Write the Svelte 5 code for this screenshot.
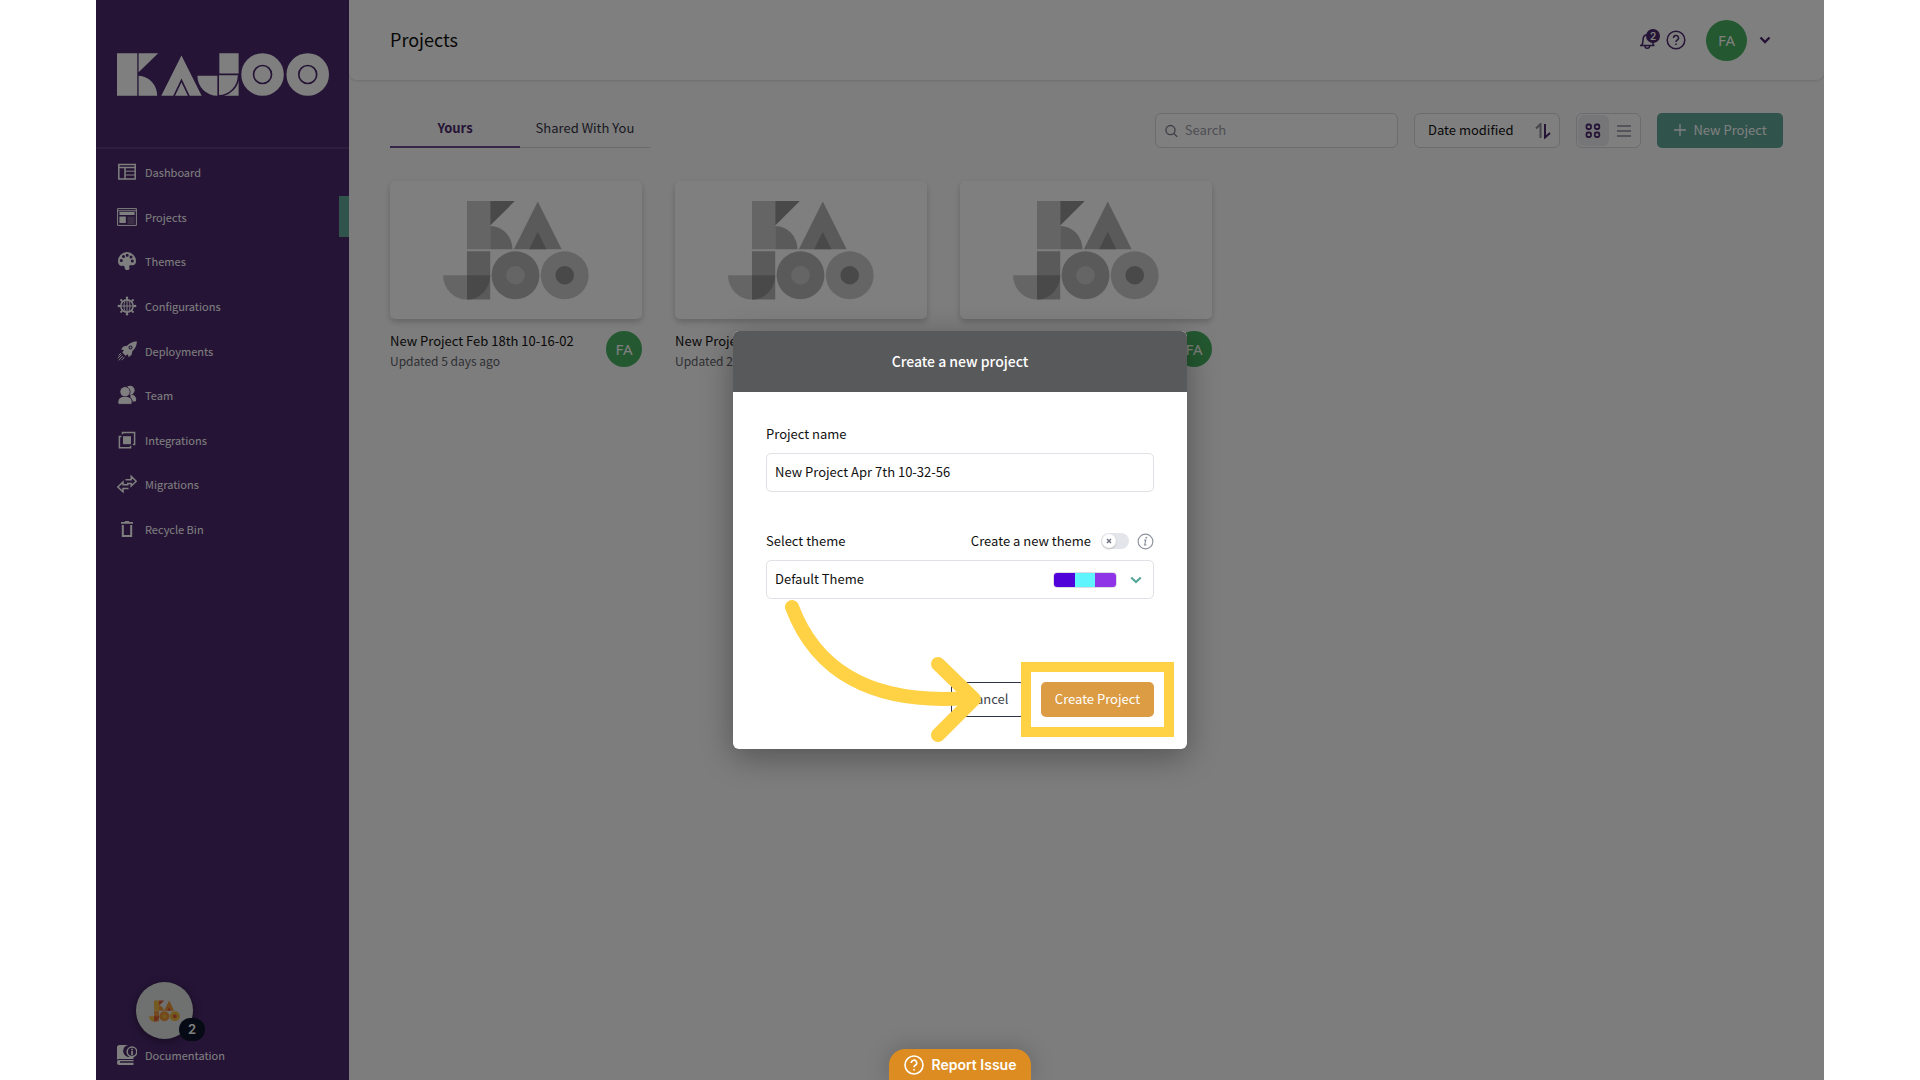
<script>
  const nav = ['Dashboard', 'Projects', 'Themes', 'Configurations', 'Deployments', 'Team', 'Integrations', 'Migrations', 'Recycle Bin'];
  const projects = [
    { name: 'New Project Feb 18th 10-16-02', updated: 'Updated 5 days ago' },
    { name: 'New Project Jan 30th 09-41', updated: 'Updated 2 months ago' },
    { name: 'New Project Jan 12th 14-05', updated: 'Updated 2 months ago' }
  ];
  let projectName = $state('New Project Apr 7th 10-32-56');
  let newTheme = $state(false);
</script>

{#snippet mark(kind)}
  <svg class="mark {kind}" viewBox="0 0 439 297" aria-hidden="true">
    <path class="a" d="M72 0h70v145H72z" />
    <path class="c" d="M142 0h74l-74 73z" />
    <path class="b" d="M142 75a67 70 0 0 1 67 70h-67z" />
    <path class="b" d="M285 1l72 144H213z" />
    <path class="c" d="M285 92l26 53h-52z" />
    <path class="b" d="M72 151h70v145H72z" />
    <path class="a" d="M0 223h72v73A72 73 0 0 1 0 223z" />
    <path class="c" d="M72 223h70a70 73 0 0 1-70 73z" />
    <circle class="b" cx="218" cy="223" r="72" />
    <circle class="a" cx="218" cy="223" r="28" />
    <circle class="a" cx="366" cy="223" r="72" />
    <circle class="c" cx="366" cy="223" r="28" />
  </svg>
{/snippet}

{#snippet navIcon(name)}
  <svg class="nav-icon" viewBox="0 0 20 20" aria-hidden="true">
    {#if name === 'Dashboard'}
      <path class="line" d="M1.8 2.5h16.4v14.4H1.8zM1.8 5.4h16.4M8 5.4v11.5" />
      <path class="thin" d="M8 9.2h10M8 13h10" />
    {:else if name === 'Projects'}
      <path class="thin" d="M.6 1.6h18.8v16.8H.6zM.6 3.8h18.8" />
      <path d="M2.4 5h15.2v3H2.4zM2.4 9.6h6.4V16H2.4z" />
      <path opacity=".25" d="M10.6 9.6h7V17h-7z" />
    {:else if name === 'Themes'}
      <path fill-rule="evenodd" d="M10 1a9 9 0 0 1 9 9c0 3.4-2 4.6-4.6 4.2-1.8-.3-2.600.4-2.100 1.800.5 1.600.1 3-2 3-1.600 0-2.500-1-2.700-2.600-.2-1.500-1.200-1.800-2.800-1.500C2.500 15.200 1 13 1 10a9 9 0 0 1 9-9zM6.500 4a1.500 1.500 0 1 0 0 3 1.500 1.500 0 0 0 0-3zm3.700-1.300a1.500 1.500 0 1 0 0 3 1.500 1.500 0 0 0 0-3zM14 4.400a1.500 1.500 0 1 0 0 3 1.500 1.500 0 0 0 0-3zm1.300 4.100a1.500 1.500 0 1 0 0 3 1.500 1.500 0 0 0 0-3zM4.300 8a1.500 1.500 0 1 0 0 3 1.500 1.500 0 0 0 0-3z" />
    {:else if name === 'Configurations'}
      <circle class="line" cx="10" cy="10" r="6.200" />
      <path class="thin" d="M10 3.800v12.400M3.800 10h12.400" />
      <ellipse class="thin" cx="10" cy="10" rx="3" ry="6.200" />
      <path class="line" d="M10 4V1.800M10 16v2.200M4 10H1.800M16 10h2.200M5.700 5.700L4.200 4.200M14.300 5.700l1.500-1.500M5.700 14.300l-1.500 1.500M14.300 14.300l1.500 1.500" />
      <circle cx="10" cy="1.800" r="1.200" /><circle cx="10" cy="18.200" r="1.200" /><circle cx="1.800" cy="10" r="1.200" /><circle cx="18.200" cy="10" r="1.200" />
      <circle cx="4.200" cy="4.200" r="1.100" /><circle cx="15.800" cy="4.200" r="1.100" /><circle cx="4.200" cy="15.800" r="1.100" /><circle cx="15.800" cy="15.800" r="1.100" />
    {:else if name === 'Deployments'}
      <path fill-rule="evenodd" d="M19.800.3c.1 2-.3 3.600-1 5.100-.7 1.600-2 3.200-3.400 4.600l-.8 3.800-3 2.400-.6-2.900-2.500 1.500-3.200-3.200 1.600-2.500L4 8.500l2.300-3 3.800-.8C12.500 2.300 15.500.6 19.800.3zM13.500 4.600a2 2 0 1 0 0 4 2 2 0 0 0 0-4z" />
      <circle cx="13.500" cy="6.600" r="1" />
      <path class="thin" d="M4.500 13.500L.8 17.200M5.800 15L1.500 19.400M7.500 16l-3 3.200" />
      <path class="thin" d="M3.800 12.200l-2.300 2.300" />
    {:else if name === 'Team'}
      <circle cx="13" cy="5.300" r="4.600" />
      <path d="M13.500 9.500c3.300 0 5.700 1.800 5.700 5.500 0 1.100-.8 1.600-1.800 1.600h-4z" />
      <g class="cut">
        <circle cx="8" cy="6.800" r="5" />
        <path d="M8 11.200c4.300 0 7.200 2.200 7.200 6.200 0 1.300-.8 2-2 2H2.800c-1.200 0-2-.7-2-2 0-4 2.900-6.200 7.200-6.200z" />
      </g>
      <circle cx="8" cy="6.800" r="4.500" />
    {:else if name === 'Integrations'}
      <path d="M6 6.200h8v8H6z" />
      <path class="line" d="M5.500 4.200V2.400h12.100v12h-1.800M4.500 6.500H2.400v11.300h11.200v-2" />
    {:else if name === 'Migrations'}
      <path class="line" d="M8.500 5.700h5.700V2.300l5 5-5 4.700V9.400H10M11.500 10.800H6V8L.8 13 6 17.800v-3.300h5.500" />
    {:else if name === 'Recycle Bin'}
      <path class="bold" d="M5.800 6v10.900h8.400V6" />
      <path d="M4 3h3.500l.8-1h3.400l.8 1H16v1.800H4z" />
    {:else}
      <path d="M2.500 0h8.800A6 6 0 0 0 13 12h3.500v2H2a2 2 0 0 0-2 1V2.500A2.500 2.500 0 0 1 2.500 0zM2 15h14.500v1.200H3v1.600h13.500V20H2a2 2 0 0 1-2-2v-1a2 2 0 0 1 2-2z" />
      <circle class="line" cx="15" cy="6.800" r="4.800" />
      <path d="M14.200 6h1.700v4h-1.700zM14.200 3.800h1.700v1.400h-1.700z" />
    {/if}
  </svg>
{/snippet}

<div class="stage">
  <div class="app">
    <aside>
      <a class="logo" href="#home" aria-label="Kajoo">
        <svg viewBox="0 0 638 128" aria-hidden="true">
          <path d="M0 0h61v128H0zM65 0h59L65 57zM65 68a57 60 0 0 1 56 60H65z" />
          <path d="M308 0h58v61h-58zM242 68h60v60a60 60 0 0 1-60-60zM307 66h59v62h-59z" />
          <path class="gap" d="M366 66a60 62 0 0 1-60 62" />
          <path class="edge" d="M194 2l64 128H130z" />
          <path class="gap" d="M171 130l23-48 23 48" />
          <circle cx="438" cy="64" r="64" /><circle class="gap" cx="438" cy="64" r="27" />
          <circle cx="574" cy="64" r="64" /><circle class="gap" cx="574" cy="64" r="27" />
        </svg>
      </a>
      <nav>
        {#each nav as item}
          <a href="#{item.toLowerCase().replace(' ', '-')}" class:active={item === 'Projects'}>{@render navIcon(item)}{item}</a>
        {/each}
      </nav>
      <div class="foot">
        <a href="#documentation">{@render navIcon('Documentation')}Documentation</a>
        <button class="chat" aria-label="Open checklist">{@render mark('warm')}<span>2</span></button>
      </div>
    </aside>

    <div class="page">
      <header>
        <h1>Projects</h1>
        <div class="account">
          <button class="bell" aria-label="Notifications">
            <svg viewBox="0 0 20 20" aria-hidden="true"><path d="M1 15.500h14.500M2.500 15.500c1.500-1.500 1.500-3 1.500-5.500C4 6.500 6 4.500 9 4.500M6 16a2.300 2.300 0 0 0 4.600 0M13.500 12c.2 1.500.7 2.500 1.500 3.500" /></svg>
            <span>2</span>
          </button>
          <button class="help" aria-label="Help">
            <svg viewBox="0 0 20 20" aria-hidden="true"><circle cx="10" cy="10" r="8.800" /><path d="M7.500 7.900a2.500 2.500 0 1 1 3.700 2.200c-.9.500-1.200.9-1.200 1.900M10 13.600v1.400" /></svg>
          </button>
          <span class="avatar big">FA</span>
          <button class="more" aria-label="Account menu">
            <svg viewBox="0 0 12 8" aria-hidden="true"><path d="M1.500 1.500L6 6l4.500-4.500" /></svg>
          </button>
        </div>
      </header>

      <main>
        <div class="toolbar">
          <div class="tabs">
            <button class="on">Yours</button>
            <button>Shared With You</button>
          </div>
          <div class="tools">
            <label class="search">
              <svg viewBox="0 0 14 14" aria-hidden="true"><circle cx="6" cy="6" r="5" /><path d="M9.600 9.600l3.700 3.700" /></svg>
              <input type="search" placeholder="Search" aria-label="Search" />
            </label>
            <div class="sort">
              <select aria-label="Sort by"><option>Date modified</option></select>
              <svg viewBox="0 0 18 16" aria-hidden="true"><path class="up" d="M2 5.500L6.500 1v14" /><path class="down" d="M11 1v13.500l5-4.500" /></svg>
            </div>
            <div class="views">
              <button class="on" aria-label="Grid view"><svg viewBox="0 0 16 16" aria-hidden="true"><rect x="1.500" y="1.500" width="4.500" height="4.500" rx="1.500" /><rect x="9.800" y="1.500" width="4.500" height="4.500" rx="1.500" /><rect x="1.500" y="9.500" width="4.500" height="4.500" rx="1.500" /><rect x="9.800" y="9.500" width="4.500" height="4.500" rx="1.500" /></svg></button>
              <button aria-label="List view"><svg viewBox="0 0 16 16" aria-hidden="true"><path d="M1 3h14M1 8h14M1 13h14" /></svg></button>
            </div>
            <button class="new"><svg viewBox="0 0 14 14" aria-hidden="true"><path d="M7 1v12M1 7h12" /></svg>New Project</button>
          </div>
        </div>

        <div class="cards">
          {#each projects as p}
            <article>
              <a class="thumb" href="#open" aria-label={p.name}>{@render mark('grey')}</a>
              <div class="meta">
                <div class="info"><h2>{p.name}</h2><p>{p.updated}</p></div>
                <span class="avatar">FA</span>
              </div>
            </article>
          {/each}
        </div>
      </main>
    </div>

    <div class="overlay">
      <form class="modal" onsubmit={(e) => e.preventDefault()}>
        <h2>Create a new project</h2>
        <div class="body">
          <label class="caption" for="pname">Project name</label>
          <input id="pname" class="field" type="text" bind:value={projectName} />
          <div class="theme-row">
            <label for="theme">Select theme</label>
            <label class="switch">Create a new theme
              <input type="checkbox" bind:checked={newTheme} />
              <span class="track"><span class="knob"><svg viewBox="0 0 6 6" aria-hidden="true"><path d="M1 1l4 4M5 1L1 5" /></svg></span></span>
            </label>
            <svg class="info-icon" viewBox="0 0 18 18" aria-hidden="true"><circle cx="9" cy="9" r="7.800" /><path d="M7.500 7.600h1.800l-1.200 5h1.800" /><circle class="dot" cx="9.900" cy="4.900" r="1" /></svg>
          </div>
          <div class="pick">
            <select id="theme" class="field"><option>Default Theme</option></select>
            <div class="deco">
              <div class="swatches"><i class="s1"></i><i class="s2"></i><i class="s3"></i></div>
              <svg viewBox="0 0 12 8" aria-hidden="true"><path d="M1.200 1.500L6 6l4.800-4.500" /></svg>
            </div>
          </div>
          <div class="actions">
            <button type="button" class="cancel">Cancel</button>
            <div class="focus"><button type="submit" class="create">Create Project</button></div>
          </div>
        </div>
        <svg class="arrow" viewBox="0 0 200 144" aria-hidden="true">
          <path d="M8 8C32 72 88 106 183 99" /><path d="M154 65l36 35-36 36" />
        </svg>
      </form>
    </div>

    <button class="report"><svg viewBox="0 0 20 20" aria-hidden="true"><circle cx="10" cy="10" r="9" /><path d="M7.300 7.900a2.700 2.700 0 1 1 4 2.300c-1 .6-1.300 1-1.300 2M10 14v1.500" /></svg>Report Issue</button>
  </div>
</div>

<style>
  :global(body) { margin: 0; background: #fff; }
  * { box-sizing: border-box; }
  button { border: 0; background: none; padding: 0; font: inherit; color: inherit; }
  a { color: inherit; text-decoration: none; }
  h1, h2, p { margin: 0; font-weight: 400; }
  svg { display: block; fill: none; }
  .stage { display: flex; justify-content: center; font: 13px/20px "Noto Sans CJK SC", "Noto Sans CJK JP", "Noto Sans", sans-serif; color: #111; }
  .app { position: relative; display: flex; width: 90%; min-height: 100vh; overflow: hidden; background: #fbfbfb; }

  aside { display: flex; flex-direction: column; width: 253px; flex: none; background: #4a286c; color: #fff; font-size: 11px; }
  .logo { padding: 53px 20px 51px 21px; border-bottom: 2px solid #5b3c7b; }
  .logo svg { width: 212px; height: 43px; fill: #fff; }
  .logo .gap { fill: none; stroke: #4a286c; stroke-width: 5; }
  .logo .edge { stroke: #4a286c; stroke-width: 4; }
  nav { display: flex; flex-direction: column; justify-content: space-between; height: 401px; margin-top: 1px; }
  nav a, .foot a { display: flex; align-items: center; gap: 8px; height: 44px; padding-left: 21px; }
  nav .active { background: linear-gradient(#60a898, #60a898) right center / 10px 41px no-repeat; }
  .nav-icon { width: 20px; height: 20px; fill: #fff; }
  .nav-icon .line { fill: none; stroke: #fff; stroke-width: 1.5; }
  .nav-icon .thin { fill: none; stroke: #fff; stroke-width: 1; }
  .nav-icon .bold { fill: none; stroke: #fff; stroke-width: 2; }
  .nav-icon .cut { stroke: #4a286c; stroke-width: 1; }
  .foot { position: relative; margin-top: auto; padding-bottom: 3px; }
  .chat { position: absolute; left: 40px; bottom: 41px; display: grid; place-items: center; width: 57px; height: 57px; border-radius: 50%; background: #dce2de; box-shadow: 0 2px 8px #0006; }
  .chat .mark { width: 31px; height: 22px; }
  .chat span { position: absolute; right: -12px; bottom: -2px; width: 26px; height: 23px; border-radius: 12px; background: #0c1428; color: #fff; font: 600 13px/23px Inter, sans-serif; }

  .grey .a { fill: #cbcbcb; } .grey .b { fill: #b5b5b5; } .grey .c { fill: #929292; }
  .warm .a { fill: #e8b43c; } .warm .b { fill: #e6933a; } .warm .c { fill: #d85a3a; }

  .page { flex: 1; min-width: 0; }
  header { display: flex; align-items: center; justify-content: space-between; height: 80px; padding: 0 53px 2px 41px; border-radius: 0 0 8px 8px; background: #fff; box-shadow: 0 1px 3px #0002; }
  h1 { font-size: 18px; line-height: 28px; }
  .account { display: flex; align-items: center; padding-top: 2px; }
  .account button { position: relative; }
  .account svg { stroke: #4a286c; stroke-width: 1.5; }
  .bell { margin-right: 7px; }
  .bell svg, .help svg { width: 20px; height: 20px; }
  .bell span { position: absolute; top: -1px; right: -1px; width: 14px; height: 14px; border-radius: 50%; background: #4a286c; color: #fff; font: 600 10px/14px Inter, sans-serif; }
  .avatar { display: grid; place-items: center; flex: none; width: 36px; height: 36px; border-radius: 50%; background: #47b060; color: #fff; font: 15px/20px "Noto Sans", sans-serif; }
  .big { width: 41px; height: 41px; margin: 0 12px 0 20px; }
  .account .more svg { width: 12px; height: 8px; stroke-width: 2.4; }

  main { padding: 33px 41px; }
  .toolbar { display: flex; justify-content: space-between; align-items: flex-start; }
  .tabs { display: flex; }
  .tabs button { width: 130px; height: 35px; padding-bottom: 4px; border-bottom: 1px solid #d5d5db; color: #333344; }
  .tabs .on { padding-bottom: 3px; border-bottom: 2px solid #6b4c94; color: #4a286c; font-weight: 700; }
  .tools { display: flex; gap: 16px; }
  .search, .sort, .views { display: flex; align-items: center; height: 35px; border: 1px solid #d8d8de; border-radius: 6px; background: #fff; }
  .search { width: 243px; padding: 0 9px; gap: 7px; }
  .search svg { width: 14px; height: 14px; stroke: #7c7c8c; stroke-width: 1.5; }
  .search input { width: 100%; border: 0; padding: 0 0 2px; background: none; font: inherit; outline: 0; }
  .search input::placeholder { color: #9c9ca8; }
  .sort { position: relative; width: 146px; }
  .sort select { width: 100%; height: 100%; border: 0; padding: 0 13px 2px; background: none; appearance: none; font: inherit; color: #111; }
  .sort svg { position: absolute; right: 7px; width: 18px; height: 16px; pointer-events: none; stroke-width: 2; }
  .up { stroke: #8c8c9c; } .down { stroke: #4a286c; }
  .views { width: 65px; padding: 1px; }
  .views button { display: grid; place-items: center; flex: 1; height: 31px; border-radius: 6px; }
  .views .on { background: #ececf2; }
  .views svg { width: 16px; height: 16px; stroke: #8c8c9c; stroke-width: 1.5; }
  .views .on svg { stroke: #4a286c; stroke-width: 1.8; }
  .new { display: flex; align-items: center; justify-content: center; gap: 6px; width: 126px; height: 35px; padding-bottom: 1px; border-radius: 5px; background: #60a898; color: #fff; }
  .new svg { width: 14px; height: 14px; stroke: #fff; stroke-width: 1.3; }

  .cards { display: flex; gap: 33px; margin-top: 33px; }
  article { width: 252px; }
  .thumb { display: grid; place-items: center; height: 138px; border-radius: 5px; background: #fff; box-shadow: 0 3px 6px #0003; }
  .grey { width: 146px; height: 99px; }
  .meta { display: flex; justify-content: space-between; margin-top: 12px; }
  .info { min-width: 0; white-space: nowrap; }
  .info h2 { font-size: 13px; }
  .info p { font-size: 12px; color: #5c6068; }

  .overlay { position: absolute; inset: 0; display: grid; place-items: center; background: rgba(0, 0, 0, .5); }
  .modal { position: relative; width: 454px; border-radius: 6px; background: #fff; box-shadow: 0 8px 32px #0005; }
  .modal h2 { border-radius: 6px 6px 0 0; background: #58595b; color: #fff; text-align: center; font-size: 14px; line-height: 61px; font-weight: 500; }
  .body { padding: 32px 33px; }
  .caption { display: block; margin-bottom: 9px; }
  .field { display: block; width: 100%; height: 39px; border: 1px solid #e0e0e6; border-radius: 5px; padding: 0 8px 2px; background: #fff; appearance: none; font: inherit; color: #111; }
  .theme-row { display: flex; align-items: center; margin: 39px 0 9px; }
  .switch { position: relative; display: flex; align-items: center; gap: 10px; margin: 0 8px 0 auto; }
  .switch input { position: absolute; right: 0; width: 28px; height: 16px; margin: 0; opacity: 0; }
  .track { width: 28px; height: 16px; padding: 1px; border-radius: 8px; background: #e4e5ea; }
  .knob { display: grid; place-items: center; width: 14px; height: 14px; border-radius: 50%; background: #fff; box-shadow: 0 1px 2px #0003; }
  .switch input:checked + .track { padding-left: 13px; background: #60a898; }
  .knob svg { width: 6px; height: 6px; stroke: #6c7080; stroke-width: 1.4; }
  .info-icon { width: 17px; height: 17px; stroke: #8c929e; stroke-width: 1.2; }
  .info-icon .dot { fill: #8c929e; stroke: none; }
  .pick { position: relative; }
  .deco { position: absolute; inset: 0 12px 0 auto; display: flex; align-items: center; gap: 13px; pointer-events: none; }
  .swatches { display: flex; width: 64px; height: 16px; overflow: hidden; border: 1px solid #dcdce4; border-radius: 4px; }
  .swatches i { flex: 1; }
  .s1 { background: #5000d8; } .s2 { background: #60f4ff; } .s3 { background: #9034e8; }
  .deco svg { width: 12px; height: 8px; stroke: #58a898; stroke-width: 2.2; }
  .actions { display: flex; justify-content: flex-end; gap: 16px; margin-top: 83px; }
  .actions button { height: 35px; padding-bottom: 1px; border-radius: 5px; }
  .cancel { width: 74px; border: 1px solid #303448; color: #40444c; }
  .focus { position: relative; }
  .focus::after { content: ""; position: absolute; inset: -20px; border: 10px solid #ffd144; pointer-events: none; }
  .actions .create { width: 113px; background: #dc9c44; color: #fff; }
  .arrow { position: absolute; left: 51px; top: 268px; width: 200px; height: 144px; pointer-events: none; stroke: #ffd144; stroke-width: 14; stroke-linecap: round; stroke-linejoin: round; }

  .report { position: absolute; left: 0; right: 0; bottom: 0; display: flex; align-items: center; justify-content: center; gap: 8px; width: 142px; height: 31px; margin: 0 auto; border-radius: 16px 16px 0 0; background: #dc8c20; color: #fff; font: 600 14px/20px Inter, sans-serif; box-shadow: 0 0 24px #0003; }
  .report svg { width: 20px; height: 20px; stroke: #fff; stroke-width: 1.6; }
</style>
